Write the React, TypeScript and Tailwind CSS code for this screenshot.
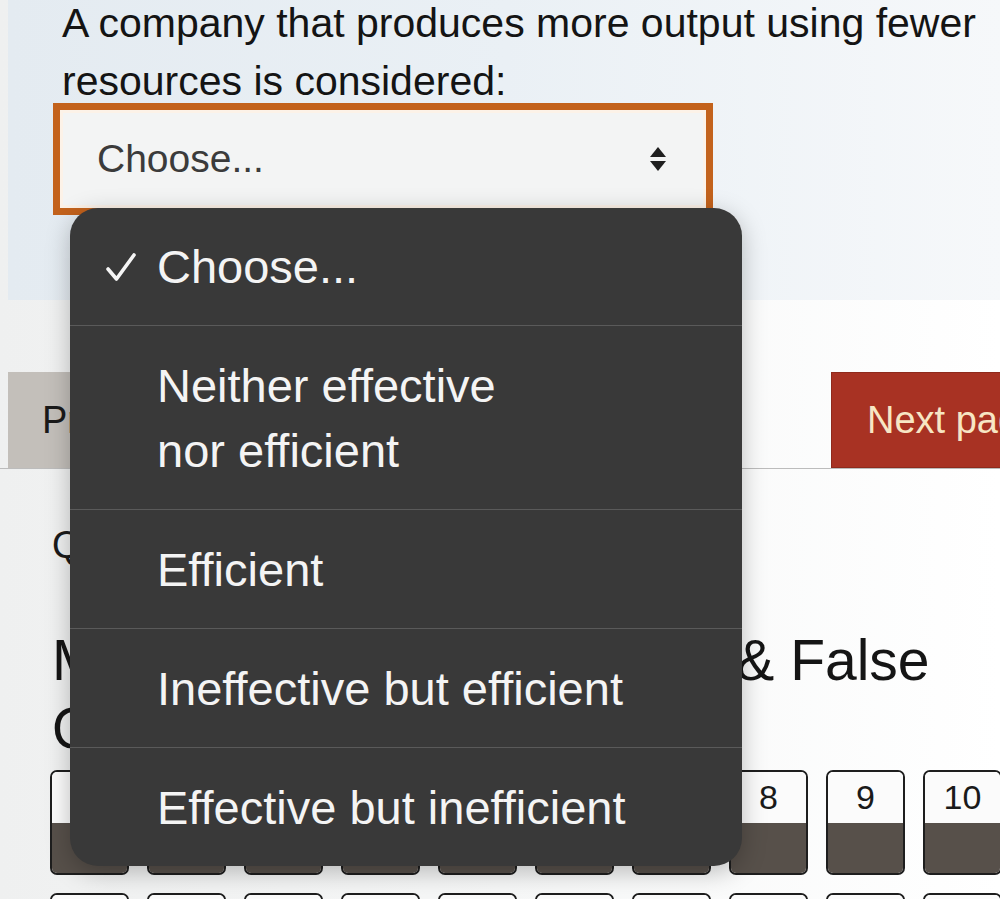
import React from "react";

const options = [
  { id: "choose", lines: ["Choose..."], checked: true },
  { id: "neither", lines: ["Neither effective", "nor efficient"] },
  { id: "efficient", lines: ["Efficient"] },
  { id: "ineffective", lines: ["Ineffective but efficient"] },
  { id: "effective", lines: ["Effective but inefficient"] },
];

const pages = Array.from({ length: 20 }, (_, i) => i + 1);

const SortArrows = () => (
  <svg width="18" height="26" viewBox="0 0 18 26" className="shrink-0">
    <path d="M9 1 L17 11 L1 11 Z" fill="#1f1f1f" />
    <path d="M9 25 L17 15 L1 15 Z" fill="#1f1f1f" />
  </svg>
);

const Check = () => (
  <svg width="32" height="30" viewBox="0 0 32 30" className="mr-[20px] shrink-0">
    <path d="M3 17 L11.5 27 L29 3" fill="none" stroke="#f5f5f5" strokeWidth="3.6" strokeLinecap="round" strokeLinejoin="round" />
  </svg>
);

const OptionMenu = () => (
  <div className="absolute left-[70px] top-[208px] w-[672px] overflow-hidden rounded-[28px] bg-[#393939] shadow-[0_6px_24px_rgba(0,0,0,0.25)] font-['Liberation_Sans',Arial,sans-serif] text-[47px] text-[#f4f4f4]">
    {options.map((opt, idx) => (
      <div
        key={opt.id}
        className={`flex items-center leading-[65px] ${idx > 0 ? "border-t border-[#5a5a5a] pt-[27px] pb-[26px]" : "py-[26px]"} ${opt.checked ? "pl-[35px]" : "pl-[87px]"}`}
      >
        {opt.checked && <Check />}
        <div>
          {opt.lines.map((l) => (
            <div key={l}>{l}</div>
          ))}
        </div>
      </div>
    ))}
  </div>
);

export default function App() {
  return (
    <div className="relative h-[899px] w-[1000px] overflow-hidden bg-gradient-to-r from-[#eff0f0] via-[#f6f7f7] to-[#ffffff] font-['Liberation_Sans',Arial,sans-serif]">
      {/* question box */}
      <div className="ml-2 flow-root h-[300px] bg-gradient-to-r from-[#e4ebf1] via-[#eaf0f5] to-[#f6f8fa] pl-[54px]">
        <p className="-mt-[6px] text-[41px] leading-[58px] text-[#141414]">
          A company that produces more output using fewer
          <br />
          resources is considered:
        </p>
        <div className="-ml-[9px] -mt-[7px] h-[112px] w-[660px] border-[7px] border-[#c3621c]">
          <div className="flex h-full items-center justify-between border-[3px] border-[#fcf2e8] bg-[#f3f4f4] pl-[34px] pr-[36px]">
            <span className="text-[39px] text-[#3b3b3b]">Choose...</span>
            <SortArrows />
          </div>
        </div>
      </div>

      {/* page navigation */}
      <div className="mt-[72px] flex border-b border-[#bcbcbc] pl-2">
        <button className="h-[96px] w-[240px] overflow-hidden whitespace-nowrap bg-[#c3bfba] pl-[34px] text-left text-[38px] text-[#1a1a1a]">
          Previous page
        </button>
        <div className="flex-1" />
        <button className="-mr-[61px] h-[96px] w-[230px] shrink-0 overflow-hidden whitespace-nowrap border border-[#8f2a1c] bg-[#a83223] pl-[35px] text-left text-[38px] text-[#f7e6c4]">
          Next page
        </button>
      </div>

      <div className="pl-[52px]">
        <p className="mt-[57px] text-[38px] leading-[38px] text-[#1a1a1a]">Quiz navigation</p>
        <h2 className="mt-[62px] text-[57px] leading-[68px] text-[#151515]">
          Module Review Quiz: True &amp; False
          <br />
          Questions
        </h2>
      </div>

      <div className="mt-[8px] grid w-fit grid-cols-[repeat(10,79px)] gap-x-[18px] gap-y-[18px] pl-[50px]">
        {pages.map((n) => (
          <div key={n} className="flex h-[105px] flex-col overflow-hidden rounded-[7px] border-2 border-[#1e1e1e]">
            <div className="flex h-[51px] items-center justify-center bg-[#fbfbfb] text-[34px] text-[#1a1a1a]">{n}</div>
            <div className="flex-1 bg-[#57504a]" />
          </div>
        ))}
      </div>

      <OptionMenu />
    </div>
  );
}
